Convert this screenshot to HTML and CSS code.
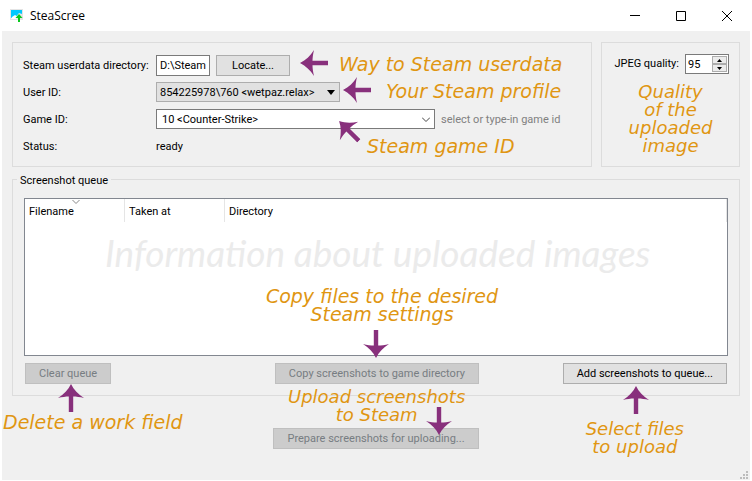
FILE: index.html
```html
<!DOCTYPE html>
<html lang="en">
<head>
<meta charset="utf-8">
<meta name="viewport" content="width=device-width, initial-scale=1">
<title>SteaScree</title>
<link rel="stylesheet" href="styles.css">
</head>
<body>
<svg class="defs" aria-hidden="true">
  <symbol id="arrow" viewBox="0 0 26 28">
    <path d="M13 0C16 6 20 10 26 14C22 13 18 12.500 15.200 12.500V28H10.800V12.500C8 12.500 4 13 0 14C6 10 10 6 13 0Z" fill="#88307c"/>
  </symbol>
</svg>
<div class="window">
  <header class="titlebar">
    <svg class="logo" viewBox="0 0 14 14" aria-hidden="true">
      <path d="M0 0H13V11H0Z" fill="#e4e4e4"/>
      <path d="M1 1H12V5L9 4L5 9H1Z" fill="#00c8ff"/>
      <path d="M2 8L5 6L8 8L6 10H1Z" fill="#fff"/>
      <path d="M9 5L12.500 9H10V13H8V9H5.500Z" fill="#0ac81e"/>
    </svg>
    <h1 class="title">SteaScree</h1>
    <div class="controls">
      <button class="control" type="button" aria-label="Minimize"><svg viewBox="0 0 12 12"><path d="M1 5.500H11"/></svg></button>
      <button class="control" type="button" aria-label="Maximize"><svg viewBox="0 0 12 12"><path d="M1.500 1.500H10.500V10.500H1.500Z"/></svg></button>
      <button class="control" type="button" aria-label="Close"><svg viewBox="0 0 12 12"><path d="M1 1L11 11M11 1L1 11"/></svg></button>
    </div>
  </header>

  <main class="content">
    <div class="settings">
      <section class="group form">
        <label class="cell" for="dir">Steam userdata directory:</label>
        <div class="field">
          <input class="text" id="dir" type="text" value="D:\Steam">
          <button class="button locate" type="button">Locate...</button>
        </div>
        <label class="cell" for="user">User ID:</label>
        <div class="field">
          <span class="combo combo-user">
            <select id="user"><option>854225978\760 &lt;wetpaz.relax&gt;</option></select>
            <svg class="caret" viewBox="0 0 8 5" aria-hidden="true"><path d="M0 0H8L4 5Z" fill="#000"/></svg>
          </span>
        </div>
        <label class="cell" for="game">Game ID:</label>
        <div class="field">
          <span class="combo combo-game">
            <select id="game"><option>10 &lt;Counter-Strike&gt;</option></select>
            <svg class="caret" viewBox="0 0 8 5" aria-hidden="true"><path d="M0 0.500L4 4.500L8 0.500" fill="none" stroke="#444"/></svg>
          </span>
          <span class="cell hint">select or type-in game id</span>
        </div>
        <span class="cell">Status:</span>
        <span class="cell">ready</span>

        <p class="note note-dir">Way to Steam userdata</p>
        <p class="note note-user">Your Steam profile</p>
        <p class="note note-game">Steam game ID</p>
        <svg class="arrow left arrow-dir"><use href="#arrow"/></svg>
        <svg class="arrow left arrow-user"><use href="#arrow"/></svg>
        <svg class="arrow up-left arrow-game"><use href="#arrow"/></svg>
      </section>

      <section class="group quality">
        <div class="quality-row">
          <label for="jpeg">JPEG quality:</label>
          <span class="spin">
            <input id="jpeg" type="number" value="95" min="0" max="100">
            <span class="steps">
              <button type="button" aria-label="Increase"><svg viewBox="0 0 5 3"><path d="M0 3H5L2.500 0Z"/></svg></button>
              <button type="button" aria-label="Decrease"><svg viewBox="0 0 5 3"><path d="M0 0H5L2.500 3Z"/></svg></button>
            </span>
          </span>
        </div>
        <p class="note-quality">Quality<br>of the<br>uploaded<br>image</p>
      </section>
    </div>

    <section class="group queue">
      <h2 class="legend">Screenshot queue</h2>
      <div class="list">
        <table class="table">
          <thead>
            <tr><th class="col">Filename<svg class="sort" viewBox="0 0 8 4" aria-hidden="true"><path d="M0.500 0L4 3.500L7.500 0"/></svg></th><th class="col">Taken at</th><th>Directory</th></tr>
          </thead>
        </table>
        <p class="watermark">Information about uploaded images</p>
        <p class="note note-copy">Copy files to the desired<br>Steam settings</p>
      </div>
      <div class="actions">
        <div class="action"><button class="button" type="button" disabled>Clear queue</button>
          <svg class="arrow arrow-clear"><use href="#arrow"/></svg></div>
        <div class="action"><button class="button" type="button" disabled>Copy screenshots to game directory</button>
          <svg class="arrow down arrow-copy"><use href="#arrow"/></svg></div>
        <div class="action"><button class="button" type="button">Add screenshots to queue...</button>
          <svg class="arrow arrow-add"><use href="#arrow"/></svg></div>
      </div>
    </section>

    <footer class="footer">
      <button class="button" type="button" disabled>Prepare screenshots for uploading...</button>
      <p class="note note-delete">Delete a work field</p>
      <p class="note note-upload">Upload screenshots<br>to Steam</p>
      <p class="note note-select">Select files<br>to upload</p>
      <svg class="arrow down arrow-prepare"><use href="#arrow"/></svg>
    </footer>
    <svg class="grip" viewBox="0 0 8 8" aria-hidden="true"><path d="M6 0H8V2H6ZM3 3H5V5H3ZM6 3H8V5H6ZM0 6H2V8H0ZM3 6H5V8H3ZM6 6H8V8H6Z" fill="#bcbcbc"/></svg>
  </main>
</div>
</body>
</html>
```

FILE: styles.css
```css
* { box-sizing: border-box; }

body {
  margin: 0;
  background: #fff;
  color: #000;
  font: 11px/14px Roboto, "Liberation Sans", sans-serif;
}

h1, h2, p { margin: 0; font-weight: 400; }
button, input, select { font: inherit; color: inherit; }
.defs { display: none; }

.window {
  display: flex;
  flex-direction: column;
  min-height: 100vh;
  padding: 0 2px 1px;
}

/* Title bar */
.titlebar {
  display: flex;
  align-items: center;
  height: 31px;
  padding-left: 8px;
}
.logo { width: 14px; height: 14px; }
.title {
  margin-left: 6px;
  font: 12px/16px "Open Sans", "Noto Sans", sans-serif;
}
.controls { display: flex; margin-left: auto; }
.control {
  display: grid;
  place-items: center;
  width: 46px;
  height: 31px;
  padding: 0;
  border: 0;
  background: none;
}
.control svg { width: 12px; height: 12px; fill: none; stroke: #000; }

/* Groups */
.content {
  position: relative;
  display: flex;
  flex: 1;
  flex-direction: column;
  padding: 11px 10px 0;
  background: #f0f0f0;
}
.settings {
  display: grid;
  grid-template-columns: 1fr 139px;
  gap: 9px;
}
.group { position: relative; border: 1px solid #dcdcdc; }
.form {
  display: grid;
  grid-template-columns: 133px 1fr;
  grid-auto-rows: 20px;
  row-gap: 7px;
  align-items: center;
  padding: 12px 10px 10px;
}
.cell { padding-top: 2px; }
.field { display: flex; align-items: center; gap: 6px; }

.text {
  width: 54px;
  height: 21px;
  padding: 1px 3px 0;
  border: 1px solid #7a7a7a;
  background: #fff;
}
.button {
  height: 21px;
  padding: 1px 13px 0;
  border: 1px solid #adadad;
  border-radius: 0;
  background: #e1e1e1;
  white-space: nowrap;
}
.button:disabled { border-color: #bfbfbf; background: #ccc; color: #777d82; }
.locate { width: 74px; }

.combo { position: relative; display: block; }
.combo select {
  display: block;
  width: 100%;
  height: 20px;
  padding: 2px 3px 0;
  border: 1px solid #adadad;
  border-radius: 0;
  background: #e1e1e1;
  appearance: none;
}
.combo-user { width: 184px; }
.combo-game { width: 279px; }
.combo-game select { padding-left: 5px; border-color: #7a7a7a; background: #fff; }
.caret {
  position: absolute;
  top: 8px;
  right: 5px;
  width: 8px;
  height: 5px;
  pointer-events: none;
}
.hint { color: #808080; }

.quality { padding: 11px 10px; }
.quality-row { display: flex; align-items: center; justify-content: flex-end; gap: 6px; }
.spin {
  display: flex;
  width: 44px;
  height: 20px;
  padding: 1px;
  border: 1px solid #7a7a7a;
  background: #fff;
}
.spin input {
  flex: 1;
  min-width: 0;
  padding: 2px 1px 0;
  border: 0;
  background: none;
  appearance: textfield;
}
.spin input::-webkit-inner-spin-button { appearance: none; }
.steps { display: grid; grid-template-rows: 1fr 1fr; width: 15px; }
.steps button {
  display: grid;
  place-items: center;
  padding: 0;
  border: 1px solid #adadad;
  background: #ececec;
}
.steps svg { width: 5px; height: 3px; }

/* Queue */
.queue {
  display: flex;
  flex: 1;
  flex-direction: column;
  margin-top: 12px;
  padding: 18px 11px 11px;
}
.legend {
  position: absolute;
  top: -7px;
  left: 4px;
  padding: 1px 3px 0;
  background: #f0f0f0;
  font-size: 11px;
}
.list {
  position: relative;
  flex: 1;
  border: 1px solid #828790;
  background: #fff;
}
.table { width: 100%; border-spacing: 0; table-layout: fixed; }
.table th {
  position: relative;
  height: 23px;
  padding: 2px 4px 0;
  border-right: 1px solid #e5e5e5;
  font-weight: 400;
  text-align: left;
}
.table .col { width: 100px; }
.sort {
  position: absolute;
  top: 1px;
  left: 47px;
  width: 8px;
  height: 4px;
  fill: none;
  stroke: #888;
}
.actions {
  display: flex;
  justify-content: space-between;
  padding: 7px 1px 0;
}
.action { position: relative; }
.action:nth-child(2) { margin-right: -80px; }
.action:nth-child(1), .action:nth-child(3) { z-index: 1; }

.footer {
  position: relative;
  display: flex;
  justify-content: center;
  padding: 32px 0 31px;
}
.grip { position: absolute; right: 2px; bottom: 1px; width: 8px; height: 8px; }

/* Handwritten annotations laid over the window */
.note, .note-quality {
  color: #e09612;
  font: italic 19px/18px "DejaVu Sans", "Open Sans", sans-serif;
  text-align: center;
  white-space: nowrap;
}
.note { position: absolute; z-index: 2; }
.note-quality { margin-top: 9px; font-size: 18px; }
.note-dir { top: 12px; left: 326px; }
.note-user { top: 39px; left: 373px; }
.note-game { top: 94px; left: 354px; }
.note-copy { top: 88px; left: 50%; width: 260px; margin-left: -124px; }
.note-delete { top: 17px; left: -9px; }
.note-upload { top: -8px; left: 50%; margin-left: -88px; font-size: 18px; }
.note-select { top: 24px; right: 56px; font-size: 18px; }
.watermark {
  position: absolute;
  top: 26px;
  left: 80px;
  color: #ebebeb;
  font: italic 37px/56px Lato, "Open Sans", sans-serif;
  white-space: nowrap;
}

.arrow { position: absolute; z-index: 2; width: 26px; height: 28px; pointer-events: none; }
.left { transform: rotate(-90deg); }
.up-left { transform: rotate(-45deg); }
.down { transform: rotate(180deg); }
.arrow-dir { top: 6px; left: 288px; }
.arrow-user { top: 33px; left: 331px; }
.arrow-game { top: 74px; left: 323px; }
.arrow-clear { top: 21px; left: 33px; }
.arrow-copy { top: -33px; left: 88px; }
.arrow-add { top: 23px; left: 60px; }
.arrow-prepare { top: 11px; left: 50%; margin-left: 50px; }
```
